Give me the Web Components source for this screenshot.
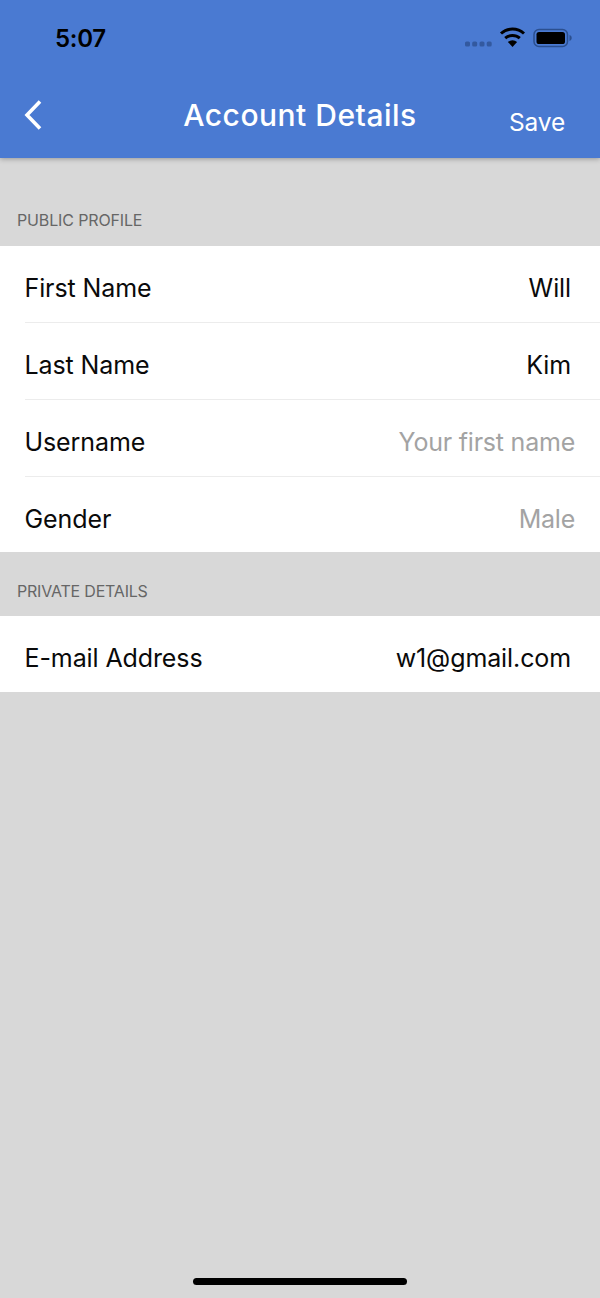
<!DOCTYPE html>
<html><head><meta charset="utf-8"><style>
html,body{margin:0;padding:0;background:#d8d8d8;}
body{width:600px;height:1298px;overflow:hidden;font-family:Inter,"Liberation Sans",sans-serif;}
</style></head><body>
<app-screen>
<nav-header title="Account Details" action="Save" time="5:07"></nav-header>
<section-label style="--h:88px;--pb:16px;--ls:-.14px">PUBLIC PROFILE</section-label>
<form-row label="First Name" value="Will" divider></form-row>
<form-row label="Last Name" value="Kim" divider></form-row>
<form-row label="Username" value="Your first name" placeholder divider></form-row>
<form-row label="Gender" value="Male" placeholder style="--rh:75px"></form-row>
<section-label style="--h:64px;--pb:15px;--ls:-.2px">PRIVATE DETAILS</section-label>
<form-row label="E-mail Address" value="w1@gmail.com" style="--rh:76px"></form-row>
<home-indicator></home-indicator>
</app-screen>
<script>
function def(name,html){customElements.define(name,class extends HTMLElement{connectedCallback(){if(this.shadowRoot)return;const r=this.attachShadow({mode:'open'});r.innerHTML=typeof html==='function'?html(this):html;}});}
def('app-screen',`<style>:host{display:flex;flex-direction:column;height:1298px;position:relative;background:#d8d8d8}</style><slot></slot>`);
def('nav-header',e=>`<style>
:host{display:flex;flex-direction:column;height:158px;background:#4a7ad2;box-shadow:0 1px 5px rgba(0,0,0,.3);position:relative;z-index:1;color:#fff}
.status{height:74px;display:flex;align-items:flex-start;justify-content:space-between}
.time{margin:24px 0 0 55px;font:600 24px/29px Inter,sans-serif;color:#000;letter-spacing:-.3px}
.icons{display:flex;align-items:flex-start;margin-right:25px}
.icons svg{display:block;margin-top:20px}
.bar{height:84px;display:grid;grid-template-columns:1fr auto 1fr;align-items:center}
.back{padding:0 0 0 22px;margin-top:-2px;display:flex}
.title{font:500 30px/36px Inter,sans-serif;letter-spacing:.5px;margin-top:-3px}
.save{justify-self:end;margin:11px 35px 0 0;font:400 24.5px/30px Inter,sans-serif;letter-spacing:-.2px}
</style>
<div class="status"><div class="time">${e.getAttribute('time')}</div>
<div class="icons"><svg width="115" height="40" viewBox="460 20 115 40">
<g fill="#33599f"><rect x="465" y="41.5" width="5" height="5" rx="1.6"/><rect x="472.2" y="41.5" width="5" height="5" rx="1.6"/><rect x="479.5" y="41.5" width="5" height="5" rx="1.6"/><rect x="486.7" y="41.5" width="5" height="5" rx="1.6"/></g>
<g fill="none" stroke="#000" stroke-width="3"><path d="M501 33.5A17 17 0 0 1 524 33.5"/><path d="M505.2 38.2A11 11 0 0 1 519.8 38.2"/></g>
<path d="M512.5 47l-4.6-5a6.8 6.8 0 0 1 9.2 0z" fill="#000"/>
<rect x="534" y="29.5" width="33.5" height="17" rx="5" fill="none" stroke="#2b4f8f" stroke-width="1.5"/>
<rect x="536.5" y="32" width="28.5" height="12" rx="2.6" fill="#000"/>
<path d="M569.5 35v6c1.4-.4 2.2-1.6 2.2-3s-.8-2.6-2.2-3z" fill="#2b4f8f"/>
</svg></div></div>
<div class="bar"><div class="back"><svg width="22" height="32" viewBox="0 0 22 32"><path d="M18 2.5 5 16l13 13.5" fill="none" stroke="#fff" stroke-width="3.6"/></svg></div>
<div class="title">${e.getAttribute('title')}</div><div class="save">${e.getAttribute('action')}</div></div>`);
def('section-label',`<style>:host{display:flex;align-items:flex-end;box-sizing:border-box;height:var(--h);padding:0 0 var(--pb) 17px;font:400 16px/20px Inter,sans-serif;color:#666;letter-spacing:var(--ls)}</style><slot></slot>`);
def('form-row',e=>`<style>
:host{display:block;background:#fff;height:var(--rh,77px);box-sizing:border-box;position:relative}
.in{display:flex;justify-content:space-between;align-items:center;height:76px;padding:8px ${e.hasAttribute('placeholder')?25:29}px 0 24.5px;font:400 25px/30px Inter,sans-serif;color:#0a0a0a;letter-spacing:-.1px;box-sizing:border-box}
.v{${e.hasAttribute('placeholder')?'color:#a3a3a3;letter-spacing:-.22px':''}}
.d{position:absolute;left:25px;right:0;top:76px;height:1px;background:#ececec}
</style><div class="in"><span>${e.getAttribute('label')}</span><span class="v">${e.getAttribute('value')}</span></div>${e.hasAttribute('divider')?'<div class="d"></div>':''}`);
def('home-indicator',`<style>:host{position:absolute;left:193px;top:1278px;width:214px;height:7px;border-radius:4px;background:#000}</style>`);
</script>
</body></html>
